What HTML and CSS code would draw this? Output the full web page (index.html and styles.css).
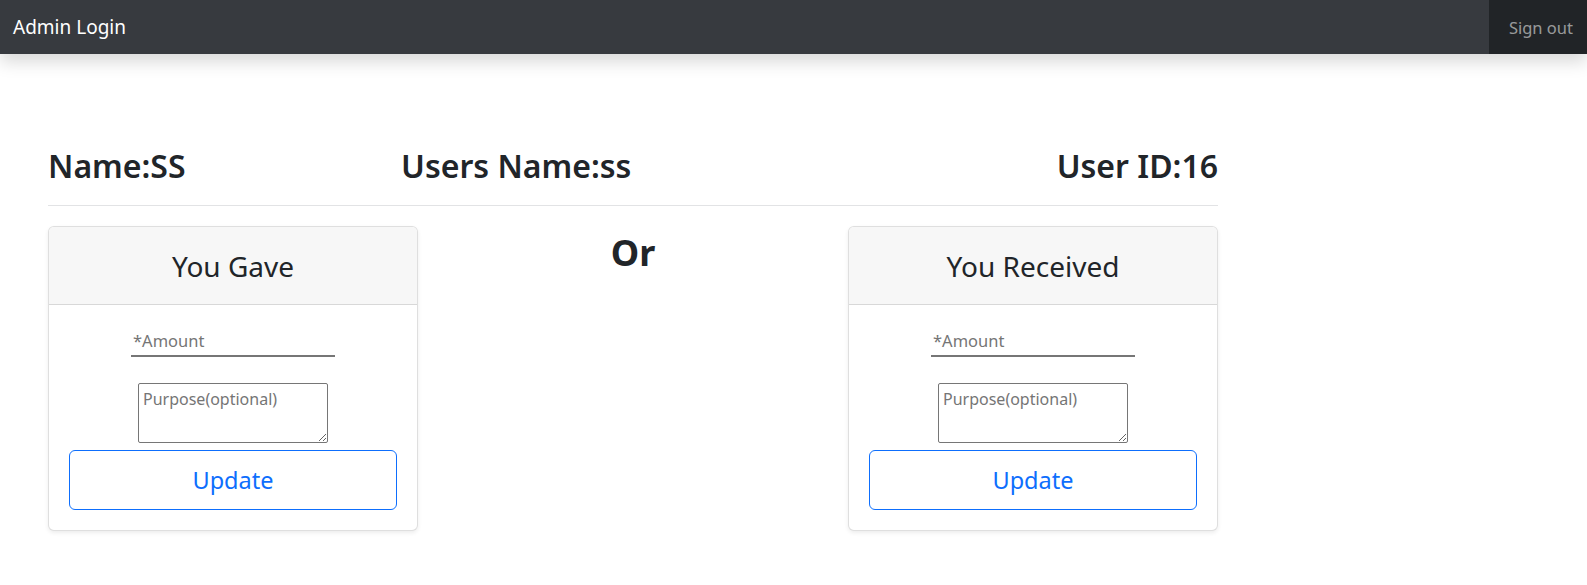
FILE: index.html
```html
<!DOCTYPE html>
<html lang="en">
<head>
<meta charset="utf-8">
<title>Admin Login</title>
<link rel="stylesheet" href="styles.css">
</head>
<body>
<header class="navbar">
  <a class="brand" href="#">Admin Login</a>
  <a class="signout" href="#">Sign out</a>
</header>
<main class="main">
  <div class="info-row">
    <h2 class="info">Name:SS</h2>
    <h2 class="info">Users Name:ss</h2>
    <h2 class="info info-right">User ID:16</h2>
  </div>
  <hr class="divider">
  <div class="cards">
    <div class="card">
      <div class="card-header"><h3 class="card-title">You Gave</h3></div>
      <div class="card-body">
        <input class="amount" type="text" placeholder="*Amount">
        <textarea class="purpose" placeholder="Purpose(optional)"></textarea>
        <button class="btn-update" type="button">Update</button>
      </div>
    </div>
    <div class="or-col"><h1 class="or">Or</h1></div>
    <div class="card">
      <div class="card-header"><h3 class="card-title">You Received</h3></div>
      <div class="card-body">
        <input class="amount" type="text" placeholder="*Amount">
        <textarea class="purpose" placeholder="Purpose(optional)"></textarea>
        <button class="btn-update" type="button">Update</button>
      </div>
    </div>
  </div>
</main>
</body>
</html>
```
FILE: styles.css
```css
* { box-sizing: border-box; }
html, body { margin: 0; padding: 0; }
body {
  font-family: "Noto Sans", "Open Sans", sans-serif;
  color: #212529;
  background: #fff;
  width: 1587px;
  height: 585px;
  overflow: hidden;
}
.navbar {
  display: flex;
  justify-content: space-between;
  align-items: stretch;
  height: 54px;
  background: #373a3f;
  box-shadow: 0 8px 16px rgba(0, 0, 0, .15);
  position: relative;
  z-index: 2;
}
.brand {
  display: flex;
  align-items: center;
  padding-left: 13px;
  font-size: 19px;
  color: #fff;
  text-decoration: none;
}
.signout {
  display: flex;
  align-items: center;
  padding: 0 14px 0 20px;
  background: #212427;
  color: rgba(255, 255, 255, .55);
  font-size: 16.5px;
  text-decoration: none;
}
.main {
  width: 1218px;
  padding: 93px 0 0 48px;
}
.info-row {
  display: grid;
  grid-template-columns: 353px auto 1fr;
  align-items: baseline;
}
.info {
  margin: 0;
  font-size: 32px;
  font-weight: 600;
  line-height: 38px;
}
.info-right { text-align: right; }
.divider {
  margin: 20px 0 20px;
  border: 0;
  border-top: 1px solid #e2e3e5;
}
.cards {
  display: grid;
  grid-template-columns: 370px 1fr 370px;
}
.card {
  border: 1px solid rgba(0, 0, 0, .125);
  border-radius: 6px;
  box-shadow: 0 2px 4px rgba(0, 0, 0, .075);
  overflow: hidden;
  background: #fff;
}
.card-header {
  height: 78px;
  display: flex;
  align-items: center;
  justify-content: center;
  background: #f7f7f7;
  border-bottom: 1px solid rgba(0, 0, 0, .125);
}
.card-title {
  margin: 0;
  font-size: 28px;
  font-weight: 400;
}
.card-body {
  display: flex;
  flex-direction: column;
  align-items: center;
  padding: 24px 20px 20px;
}
.amount {
  width: 204px;
  height: 28px;
  border: 0;
  border-bottom: 2px solid #767676;
  padding: 0 2px 4px;
  font-family: inherit;
  font-size: 16.5px;
  color: #212529;
  outline: none;
  background: transparent;
}
.amount::placeholder, .purpose::placeholder { color: #757575; }
.purpose {
  margin-top: 26px;
  width: 190px;
  height: 60px;
  border: 1px solid #767676;
  border-radius: 2px;
  padding: 4px 4px 2px;
  font-family: inherit;
  font-size: 16px;
  resize: both;
  display: block;
}
.btn-update {
  margin-top: 7px;
  width: 100%;
  height: 60px;
  border: 1px solid #0d6efd;
  border-radius: 6px;
  background: #fff;
  color: #0d6efd;
  font-family: inherit;
  font-size: 23.5px;
}
.or-col { text-align: center; }
.or {
  margin: 0;
  padding-top: 5px;
  font-size: 36px;
  font-weight: 700;
  line-height: 44px;
}
```
